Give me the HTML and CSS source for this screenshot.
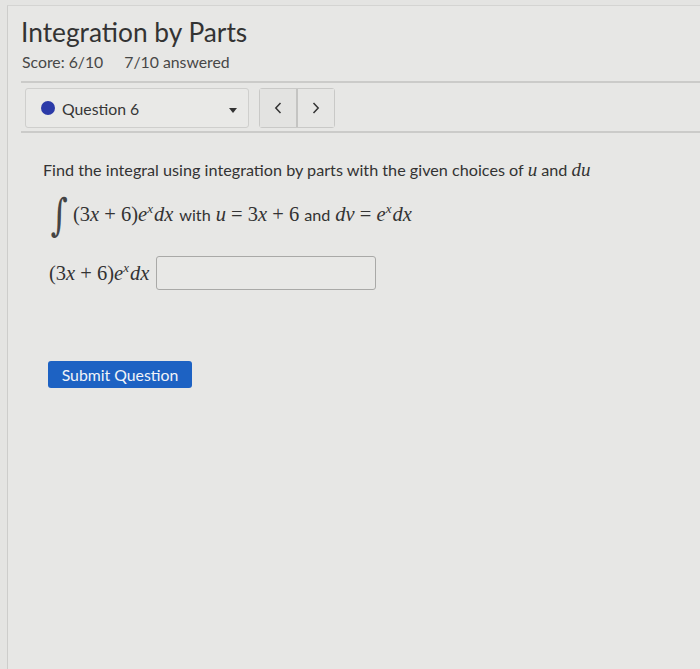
FILE: index.html
```html
<!DOCTYPE html>
<html>
<head>
<meta charset="utf-8">
<link rel="stylesheet" href="styles.css">
</head>
<body>
<div class="page">
  <div class="header">
    <h1 class="title">Integration by Parts</h1>
    <div class="score"><span>Score: 6/10</span><span class="answered">7/10 answered</span></div>
  </div>
  <div class="navbar">
    <div class="qselect">
      <span class="dot"></span>
      <span class="qlabel">Question 6</span>
      <span class="caret"></span>
    </div>
    <div class="navbtns">
      <div class="nbtn"><svg width="8" height="12" viewBox="0 0 8 12"><path d="M6.5 1 L1.8 6 L6.5 11" fill="none" stroke="#333" stroke-width="1.5"/></svg></div>
      <div class="nbtn"><svg width="8" height="12" viewBox="0 0 8 12"><path d="M1.5 1 L6.2 6 L1.5 11" fill="none" stroke="#333" stroke-width="1.5"/></svg></div>
    </div>
  </div>
  <div class="question">
    <p class="prompt">Find the integral using integration by parts with the given choices of <i class="m">u</i> and <i class="m">du</i></p>
    <p class="expr"><span class="int">&int;</span><span class="mf">(3<i>x</i> + 6)<i>e</i><sup><i>x</i></sup><i>dx</i></span><span class="with">with</span><span class="mf"><i>u</i> = 3<i>x</i> + 6</span><span class="and">and</span><span class="mf"><i>dv</i> = <i>e</i><sup><i>x</i></sup><i>dx</i></span></p>
    <div class="answer">
      <span class="mf">(3<i>x</i> + 6)<i>e</i><sup><i>x</i></sup><i>dx</i></span>
      <div class="inputbox"></div>
    </div>
    <div class="submit">Submit Question</div>
  </div>
</div>
</body>
</html>
```

FILE: styles.css
```css
html, body {
  margin: 0;
  padding: 0;
  background: #e4e4e2;
}
body {
  font-family: Lato, "Open Sans", sans-serif;
  color: #363636;
  height: 669px;
  overflow: hidden;
}
.page {
  margin: 5px 0 0 7px;
  border-top: 1px solid #d4d4d2;
  border-left: 1px solid #cdcdcb;
  height: 680px;
  background: #e7e7e5;
  padding-left: 13px;
}
.header {
  padding-top: 10px;
  border-bottom: 2px solid #cbcbc9;
  padding-bottom: 9px;
}
.title {
  margin: 0;
  font-size: 26.3px;
  font-weight: 400;
  color: #333;
  line-height: 32px;
}
.score {
  font-size: 15.8px;
  color: #474747;
  margin-top: 4px;
  line-height: 20px;
  padding-left: 1px;
}
.answered {
  margin-left: 21px;
}
.navbar {
  display: flex;
  align-items: flex-start;
  gap: 10px;
  padding: 5px 0 0 4px;
  height: 50px;
  box-sizing: border-box;
  border-bottom: 2px solid #cbcbc9;
}
.qselect {
  width: 224px;
  height: 40px;
  border: 1px solid #cfcfcd;
  border-radius: 3px;
  background: #e9e9e7;
  display: flex;
  align-items: center;
  box-sizing: border-box;
  padding-left: 15px;
}
.dot {
  width: 14px;
  height: 14px;
  border-radius: 50%;
  background: #2b3aa8;
  margin-right: 7px;
}
.qlabel {
  font-size: 15.8px;
  color: #363636;
}
.caret {
  margin-left: auto;
  margin-right: 11px;
  width: 0;
  height: 0;
  border-left: 4px solid transparent;
  border-right: 4px solid transparent;
  border-top: 5px solid #333;
  margin-top: 4px;
}
.navbtns {
  display: flex;
  border: 1px solid #c9c9c7;
  border-radius: 3px;
  height: 40px;
  box-sizing: border-box;
}
.nbtn {
  width: 36px;
  display: flex;
  align-items: center;
  justify-content: center;
  background: #e3e3e1;
}
.nbtn + .nbtn {
  border-left: 2px solid #c4c4c2;
  background: #e6e6e4;
}
.question {
  padding-left: 22px;
}
.prompt {
  margin: 27px 0 0 0;
  font-size: 16.2px;
  color: #333;
  line-height: 20px;
}
.mf {
  font-family: "Liberation Serif", "DejaVu Serif", serif;
  font-size: 20.5px;
}
.m {
  font-family: "Liberation Serif", "DejaVu Serif", serif;
  font-size: 19px;
  font-style: italic;
}
.mf i {
  font-style: italic;
}
.mf sup {
  font-size: 13px;
  vertical-align: 8px;
  line-height: 0;
  margin-right: 1px;
}
.expr {
  margin: 9px 0 0 5px;
  display: flex;
  align-items: center;
  height: 50px;
  color: #333;
}
.int {
  font-family: "DejaVu Serif", serif;
  font-size: 44px;
  font-style: italic;
  transform: scaleX(0.75);
  margin-right: 2px;
  line-height: 50px;
  margin-top: 2px;
  color: #444;
}
.with, .and {
  font-size: 16.2px;
}
.with { margin: 0 5px 0 6px; }
.and { margin: 0 5px 0 5px; }
.answer {
  margin-top: 17px;
  display: flex;
  align-items: center;
  gap: 7px;
  padding-left: 6px;
  color: #333;
}
.inputbox {
  width: 220px;
  height: 34px;
  border: 1px solid #a9a9a7;
  border-radius: 3px;
  box-sizing: border-box;
  background: #e8e8e6;
}
.submit {
  margin-top: 71px;
  margin-left: 5px;
  width: 144px;
  height: 27px;
  background: #1d62c3;
  color: #f2f4f8;
  border-radius: 3px;
  font-size: 15.8px;
  display: flex;
  align-items: center;
  justify-content: center;
}
```
